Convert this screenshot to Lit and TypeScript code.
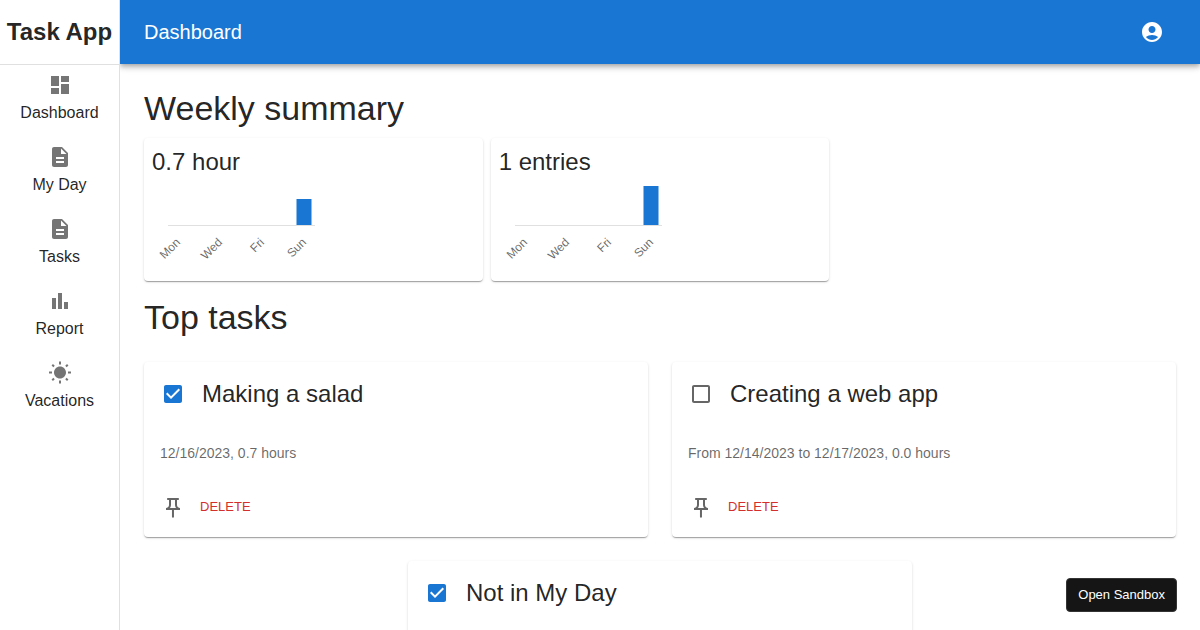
import { LitElement, html, svg, css } from "lit";
import { customElement, property, state } from "lit/decorators.js";

const ICONS = {
  dashboard: "M3 13h8V3H3v10zm0 8h8v-6H3v6zm10 0h8V11h-8v10zm0-18v6h8V3h-8z",
  article:
    "M14 2H6c-1.1 0-1.99.9-1.99 2L4 20c0 1.1.89 2 1.99 2H18c1.1 0 2-.9 2-2V8l-6-6zm2 16H8v-2h8v2zm0-4H8v-2h8v2zm-3-5V3.5L18.5 9H13z",
  report: "M4 9h4v11H4zm12 4h4v7h-4zm-6-9h4v16h-4z",
  sun: "M6.76 4.84l-1.8-1.79-1.41 1.41 1.79 1.79 1.42-1.41zM4 10.5H1v2h3v-2zm9-9.95h-2V3.5h2V.55zm7.45 3.91l-1.41-1.41-1.79 1.79 1.41 1.41 1.79-1.79zm-3.21 13.7l1.79 1.8 1.41-1.41-1.8-1.79-1.4 1.4zM20 10.5v2h3v-2h-3zm-8-5c-3.31 0-6 2.69-6 6s2.69 6 6 6 6-2.69 6-6-2.69-6-6-6zm-1 16.95h2V19.5h-2v2.95zm-7.45-3.91l1.41 1.41 1.79-1.8-1.41-1.41-1.79 1.8z",
  account:
    "M12 2C6.48 2 2 6.48 2 12s4.48 10 10 10 10-4.48 10-10S17.52 2 12 2zm0 4c1.93 0 3.5 1.57 3.5 3.5S13.93 13 12 13s-3.5-1.57-3.5-3.5S10.07 6 12 6zm0 14c-2.03 0-4.43-.82-6.14-2.88C7.55 15.8 9.68 15 12 15s4.45.8 6.14 2.12C16.43 19.18 14.03 20 12 20z",
  checked:
    "M19 3H5c-1.11 0-2 .9-2 2v14c0 1.1.89 2 2 2h14c1.11 0 2-.9 2-2V5c0-1.1-.89-2-2-2zm-9 14l-5-5 1.41-1.41L10 14.17l7.59-7.59L19 8l-9 9z",
  unchecked:
    "M19 5v14H5V5h14m0-2H5c-1.1 0-2 .9-2 2v14c0 1.1.9 2 2 2h14c1.1 0 2-.9 2-2V5c0-1.1-.9-2-2-2z",
  pin: "M14 4v5c0 1.12.37 2.16 1 3H9c.65-.86 1-1.9 1-3V4h4m3-2H7c-.55 0-1 .45-1 1s.45 1 1 1h1v5c0 1.66-1.34 3-3 3v2h5.97v7l1 1 1-1v-7H19v-2c-1.66 0-3-1.34-3-3V4h1c.55 0 1-.45 1-1s-.45-1-1-1z",
};

const icon = (name: keyof typeof ICONS) =>
  html`<svg class="icon" viewBox="0 0 24 24" aria-hidden="true"><path d=${ICONS[name]}></path></svg>`;

const shared = css`
  * {
    box-sizing: border-box;
  }
  h1,
  h2,
  h3,
  p {
    margin: 0;
    font-weight: 400;
  }
  button {
    border: 0;
    background: none;
    font: inherit;
    color: inherit;
    cursor: pointer;
  }
  .icon {
    display: block;
    width: 24px;
    height: 24px;
    fill: currentColor;
  }
  .card {
    background: #fff;
    border-radius: 4px;
    box-shadow:
      0 2px 1px -1px rgba(0, 0, 0, 0.2),
      0 1px 1px 0 rgba(0, 0, 0, 0.14),
      0 1px 3px 0 rgba(0, 0, 0, 0.12);
  }
`;

/** Small bar chart with one bar per day of the week. */
@customElement("week-chart")
class WeekChart extends LitElement {
  @property() heading = "";
  @property({ attribute: false }) values: number[] = [];
  @property({ type: Number }) max = 1;

  static styles = [
    shared,
    css`
      :host {
        display: block;
      }
      .summary {
        padding: 8px;
      }
      .heading {
        font-size: 24px;
        line-height: 32px;
      }
      .chart {
        display: block;
        width: 200px;
        height: 95px;
      }
      .axis {
        stroke: #e0e0e0;
      }
      .bar {
        fill: #1976d2;
      }
      .tick {
        fill: rgba(0, 0, 0, 0.6);
        font-size: 12px;
        text-anchor: end;
      }
    `,
  ];

  render() {
    const days = ["Mon", "", "Wed", "", "Fri", "", "Sun"];
    const band = 21;
    return html`<section class="card summary">
      <h3 class="heading">${this.heading}</h3>
      <svg class="chart" viewBox="0 0 200 95" role="img" aria-label=${this.heading}>
        ${this.values.map((v, i) => {
          const h = (v / this.max) * 39;
          return svg`<rect class="bar" x=${18.5 + band * i} y=${47 - h} width="15" height=${h}></rect>`;
        })}
        <line class="axis" x1="16" x2="163" y1="47.5" y2="47.5"></line>
        ${days.map((d, i) =>
          d
            ? svg`<text class="tick" transform="translate(${29 + band * i} 65) rotate(-45)">${d}</text>`
            : null,
        )}
      </svg>
    </section>`;
  }
}

@customElement("task-card")
class TaskCard extends LitElement {
  @property() name = "";
  @property() detail = "";
  @property({ type: Boolean }) done = false;

  static styles = [
    shared,
    css`
      :host {
        display: block;
      }
      .head {
        display: flex;
        align-items: center;
        gap: 8px;
        padding: 11px 8px;
      }
      .check {
        display: grid;
        place-items: center;
        width: 42px;
        height: 42px;
        color: rgba(0, 0, 0, 0.6);
      }
      .check > * {
        grid-area: 1 / 1;
      }
      .check:has(:checked) {
        color: #1976d2;
      }
      .box {
        appearance: none;
        width: 24px;
        height: 24px;
        margin: 0;
        cursor: pointer;
      }
      .check .icon {
        pointer-events: none;
      }
      .name {
        font-size: 24px;
        line-height: 32px;
      }
      .detail {
        padding: 16px;
        font-size: 14px;
        line-height: 22px;
        color: rgba(0, 0, 0, 0.6);
      }
      .actions {
        display: flex;
        align-items: center;
        padding: 7px 8px 8px;
      }
      .pin {
        padding: 9px;
        color: rgba(0, 0, 0, 0.6);
      }
      .delete {
        padding: 4px 6px 6px;
        font-size: 13px;
        line-height: 22px;
        text-transform: uppercase;
        color: #d32f2f;
      }
    `,
  ];

  render() {
    return html`<article class="card">
      <div class="head">
        <span class="check">
          <input
            class="box"
            id="done"
            type="checkbox"
            .checked=${this.done}
            @change=${(e: Event) => (this.done = (e.target as HTMLInputElement).checked)}
          />
          ${icon(this.done ? "checked" : "unchecked")}
        </span>
        <label class="name" for="done">${this.name}</label>
      </div>
      <p class="detail">${this.detail}</p>
      <div class="actions">
        <button class="pin" type="button" aria-label="Pin">${icon("pin")}</button>
        <button class="delete" type="button">Delete</button>
      </div>
    </article>`;
  }
}

@customElement("app-root")
class AppRoot extends LitElement {
  @state() private nav: { label: string; icon: keyof typeof ICONS }[] = [
    { label: "Dashboard", icon: "dashboard" },
    { label: "My Day", icon: "article" },
    { label: "Tasks", icon: "article" },
    { label: "Report", icon: "report" },
    { label: "Vacations", icon: "sun" },
  ];

  @state() private tasks = [
    { name: "Making a salad", detail: "12/16/2023, 0.7 hours", done: true },
    { name: "Creating a web app", detail: "From 12/14/2023 to 12/17/2023, 0.0 hours", done: false },
    { name: "Not in My Day", detail: "", done: true },
  ];

  static styles = [
    shared,
    css`
      :host {
        display: grid;
        grid-template-columns: 120px minmax(0, 1fr);
        min-height: 100vh;
        background: #fff;
        color: rgba(0, 0, 0, 0.87);
        font-family: Helvetica, "Liberation Sans", Arial, sans-serif;
        font-size: 16px;
        line-height: 24px;
      }
      .sidebar {
        position: sticky;
        top: 0;
        z-index: 2;
        height: 100vh;
        background: #fff;
        border-right: 1px solid #e0e0e0;
      }
      .brand {
        padding: 16px 0;
        border-bottom: 1px solid #e0e0e0;
        font-size: 24px;
        line-height: 32px;
        font-weight: 700;
        text-align: center;
        white-space: nowrap;
      }
      .link {
        display: flex;
        flex-direction: column;
        align-items: center;
        gap: 4px;
        padding: 8px 0 12px;
        color: inherit;
        text-decoration: none;
      }
      .link .icon {
        color: rgba(0, 0, 0, 0.54);
      }
      .bar {
        position: sticky;
        top: 0;
        z-index: 1;
        display: flex;
        align-items: center;
        justify-content: space-between;
        height: 64px;
        padding: 0 24px;
        background: #1976d2;
        color: #fff;
        box-shadow:
          0 2px 4px -1px rgba(0, 0, 0, 0.2),
          0 4px 5px 0 rgba(0, 0, 0, 0.14),
          0 1px 10px 0 rgba(0, 0, 0, 0.12);
      }
      .title {
        font-size: 20px;
        line-height: 32px;
      }
      .account {
        padding: 12px;
      }
      .content {
        padding: 24px;
      }
      .section {
        font-size: 34px;
        line-height: 40px;
      }
      .summaries {
        display: grid;
        grid-template-columns: repeat(3, 1fr);
        gap: 8px;
        padding: 10px 0 16px;
      }
      .tasks {
        display: flex;
        flex-wrap: wrap;
        justify-content: center;
        gap: 24px;
        padding-top: 25px;
      }
      .task {
        flex: 0 0 calc(50% - 12px);
      }
      .sandbox {
        position: fixed;
        right: 23px;
        bottom: 18px;
        z-index: 3;
        padding: 8px 11px;
        border: 1px solid #343434;
        border-radius: 4px;
        background: #151515;
        color: #fff;
        font-size: 13px;
        line-height: 16px;
      }
    `,
  ];

  render() {
    return html`
      <aside class="sidebar">
        <div class="brand">Task App</div>
        <nav>
          ${this.nav.map(
            (n) => html`<a class="link" href="#">${icon(n.icon)}<span>${n.label}</span></a>`,
          )}
        </nav>
      </aside>
      <div>
        <header class="bar">
          <h1 class="title">Dashboard</h1>
          <button class="account" type="button" aria-label="Account">${icon("account")}</button>
        </header>
        <main class="content">
          <h2 class="section">Weekly summary</h2>
          <div class="summaries">
            <week-chart heading="0.7 hour" max="1.05" .values=${[0, 0, 0, 0, 0, 0, 0.7]}></week-chart>
            <week-chart heading="1 entries" max="1" .values=${[0, 0, 0, 0, 0, 0, 1]}></week-chart>
          </div>
          <h2 class="section">Top tasks</h2>
          <div class="tasks">
            ${this.tasks.map(
              (t) =>
                html`<task-card class="task" name=${t.name} detail=${t.detail} ?done=${t.done}></task-card>`,
            )}
          </div>
        </main>
      </div>
      <button class="sandbox" type="button">Open Sandbox</button>
    `;
  }
}
